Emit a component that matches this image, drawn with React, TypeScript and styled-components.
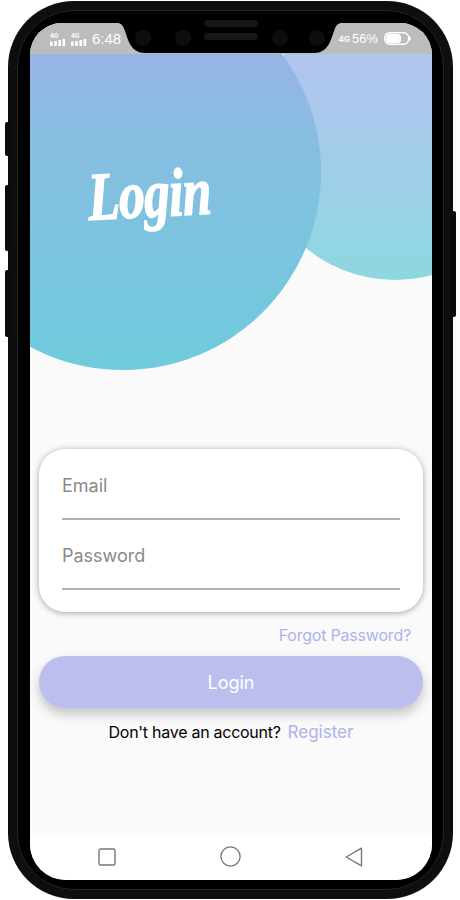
import styled, { createGlobalStyle } from "styled-components";

const GlobalStyle = createGlobalStyle`
	html, body {
		margin: 0;
		padding: 0;
		background: #fff;
	}
	* {
		box-sizing: border-box;
	}
`;

function Signal() {
	return (
		<SignalWrap>
			<SignalLabel>4G</SignalLabel>
			<svg width="17" height="7" viewBox="0 0 17 7">
				<rect x="0" y="2.5" width="2.6" height="4.5" fill="#fff" />
				<rect x="4.2" y="2" width="2.6" height="5" fill="#fff" />
				<rect x="8.4" y="1" width="2.6" height="6" fill="#fff" />
				<rect x="12.6" y="0" width="2.6" height="7" fill="#fff" />
			</svg>
		</SignalWrap>
	);
}

function Notch() {
	return (
		<NotchSvg width="225" height="30" viewBox="0 0 225 30">
			<path d="M0 0H225C221 0 219 2 217 8C214 17 211 30 197 30H28C14 30 11 17 8 8C6 2 4 0 0 0Z" fill="#000" />
			{[26, 66, 163, 200].map((cx) => (
				<circle key={cx} cx={cx} cy="15" r="8" fill="#0d0d0d" />
			))}
			<rect x="87" y="-3" width="54" height="7" rx="3.5" fill="#161616" />
			<rect x="87" y="10" width="54" height="7" rx="3.5" fill="#161616" />
		</NotchSvg>
	);
}

export default function App() {
	return (
		<>
			<GlobalStyle />
			<Page>
				<Phone>
					<SideButton $side="left" $top={122} $height={34} />
					<SideButton $side="left" $top={185} $height={66} />
					<SideButton $side="left" $top={270} $height={67} />
					<SideButton $side="right" $top={211} $height={106} />
					<Screen>
						<StatusBar>
							<StatusGroup>
								<Signal />
								<Signal />
								<TimeText>6:48</TimeText>
							</StatusGroup>
							<StatusGroup>
								<SmallG>4G</SmallG>
								<PercentText>56%</PercentText>
								<svg width="27" height="13" viewBox="0 0 27 13">
									<rect x="0.7" y="0.7" width="24" height="11.6" rx="5" fill="#bdbdbd" stroke="#fff" strokeWidth="1.4" />
									<rect x="2" y="2" width="15" height="9" rx="3.5" fill="#fff" />
									<rect x="25" y="4.5" width="1.6" height="4" rx="0.8" fill="#fff" />
								</svg>
							</StatusGroup>
						</StatusBar>
						<Main>
							<SmallCircle />
							<BigCircle />
							<Title>Login</Title>
							<Card>
								<Field>Email</Field>
								<Field>Password</Field>
							</Card>
							<Forgot>Forgot Password?</Forgot>
							<LoginButton>Login</LoginButton>
							<RegisterRow>
								Don't have an account?
								<Accent>Register</Accent>
							</RegisterRow>
						</Main>
						<NavBar>
							<svg width="18" height="18" viewBox="0 0 18 18">
								<rect x="1" y="1" width="16" height="16" rx="1.5" fill="none" stroke="#777" strokeWidth="1.4" />
							</svg>
							<svg width="21" height="21" viewBox="0 0 21 21">
								<circle cx="10.5" cy="10.5" r="9.6" fill="none" stroke="#777" strokeWidth="1.3" />
							</svg>
							<svg width="18" height="20" viewBox="0 0 18 20">
								<path d="M16.5 1.2V18.8L1.2 10Z" fill="none" stroke="#777" strokeWidth="1.4" strokeLinejoin="round" />
							</svg>
						</NavBar>
					</Screen>
					<Notch />
				</Phone>
			</Page>
		</>
	);
}

const Page = styled.div`
	width: 460px;
	height: 900px;
	padding: 1px 0 0 8px;
	overflow: hidden;
`;
const Phone = styled.div`
	position: relative;
	width: 445px;
	height: 898px;
	padding: 22px 21px 19px 22px;
	border-radius: 66px;
	background: #0e0e0e;

	&::before {
		content: "";
		position: absolute;
		inset: 9px;
		background: #000;
		border: 1.5px solid #242424;
		border-radius: 57px;
	}
`;
const SideButton = styled.div<{ $side: "left" | "right"; $top: number; $height: number }>`
	position: absolute;
	top: ${(p) => p.$top - 1}px;
	${(p) => p.$side}: -3px;
	width: 6px;
	height: ${(p) => p.$height}px;
	background: #0a0a0a;
	border-radius: 2px;
`;
const Screen = styled.div`
	position: relative;
	z-index: 1;
	width: 402px;
	height: 857px;
	display: flex;
	flex-direction: column;
	overflow: hidden;
	background: #fafafa;
	border-radius: 32px 32px 36px 36px;
`;
const StatusBar = styled.div`
	position: relative;
	flex: none;
	height: 31px;
	padding: 0 21px 0 20px;
	display: flex;
	align-items: center;
	justify-content: space-between;
	background: #bcbcbc;
`;
const NotchSvg = styled.svg`
	position: absolute;
	z-index: 2;
	top: 22px;
	left: 109px;
	overflow: visible;
`;
const StatusGroup = styled.div`
	display: flex;
	align-items: center;
	gap: 4px;
`;
const TimeText = styled.span`
	font: 400 15px "Liberation Sans", sans-serif;
	color: #fff;
`;
const PercentText = styled.span`
	font: 400 13px "Liberation Sans", sans-serif;
	color: #fff;
	margin-right: 2px;
`;
const SignalWrap = styled.div`
	display: flex;
	flex-direction: column;
	align-items: flex-start;
	width: 17px;
`;
const SignalLabel = styled.span`
	font: 700 6px/7px "Inter", sans-serif;
	color: #fff;
`;
const SmallG = styled.span`
	font: 700 8px "Inter", sans-serif;
	color: #fff;
	margin-right: -2px;
`;
const Main = styled.main`
	position: relative;
	flex: 1;
	display: flex;
	flex-direction: column;
	padding: 395px 9px 0;
	overflow: hidden;
	font-family: "Inter", sans-serif;
`;
const BigCircle = styled.div`
	position: absolute;
	left: -105px;
	top: -80px;
	width: 396px;
	height: 396px;
	border-radius: 50%;
	background: linear-gradient(180deg, #98b3e4 20%, #88bde2 40%, #6ecbdc 100%);
`;
const SmallCircle = styled.div`
	position: absolute;
	left: 225px;
	top: -54px;
	width: 280px;
	height: 280px;
	border-radius: 50%;
	background: linear-gradient(180deg, #b6c4f0 0%, #aec6ee 30%, #8cd8e0 100%);
`;
const Title = styled.h1`
	position: absolute;
	left: 58px;
	top: 109px;
	margin: 0;
	font: italic 700 68px/1 "Liberation Serif", serif;
	letter-spacing: -1px;
	color: #fff;
	-webkit-text-stroke: 1.5px #fff;
	transform-origin: left center;
	transform: rotate(-3deg) scaleX(0.76);
`;
const Card = styled.div`
	position: relative;
	height: 163px;
	padding: 1px 23px 0;
	display: flex;
	flex-direction: column;
	background: #fff;
	border-radius: 26px;
	box-shadow: 0 1px 6px rgba(0, 0, 0, 0.35);
`;
const Field = styled.div`
	height: 70px;
	padding-top: 24px;
	font-size: 18px;
	line-height: 24px;
	color: #8a8a8a;
	border-bottom: 2px solid #b0b0b0;
`;
const Forgot = styled.a`
	align-self: flex-end;
	margin: 13px 12px 0 0;
	font-size: 16px;
	line-height: 20px;
	letter-spacing: -0.2px;
	color: #adb2ec;
`;
const LoginButton = styled.button`
	margin-top: 11px;
	height: 52px;
	border: 0;
	border-radius: 26px;
	background: #bcbfee;
	color: #fff;
	font: 400 18px "Inter", sans-serif;
	box-shadow: 0 6px 12px rgba(0, 0, 0, 0.22);
`;
const RegisterRow = styled.div`
	margin-top: 14px;
	display: flex;
	justify-content: center;
	gap: 7px;
	font-size: 16px;
	line-height: 20px;
	letter-spacing: -0.27px;
	color: #000;
`;
const Accent = styled.a`
	font-size: 17px;
	letter-spacing: 0;
	color: #adb2ec;
`;
const NavBar = styled.nav`
	flex: none;
	height: 47px;
	padding: 0 69px 0 68px;
	display: flex;
	align-items: center;
	justify-content: space-between;
	background: #fff;
`;
